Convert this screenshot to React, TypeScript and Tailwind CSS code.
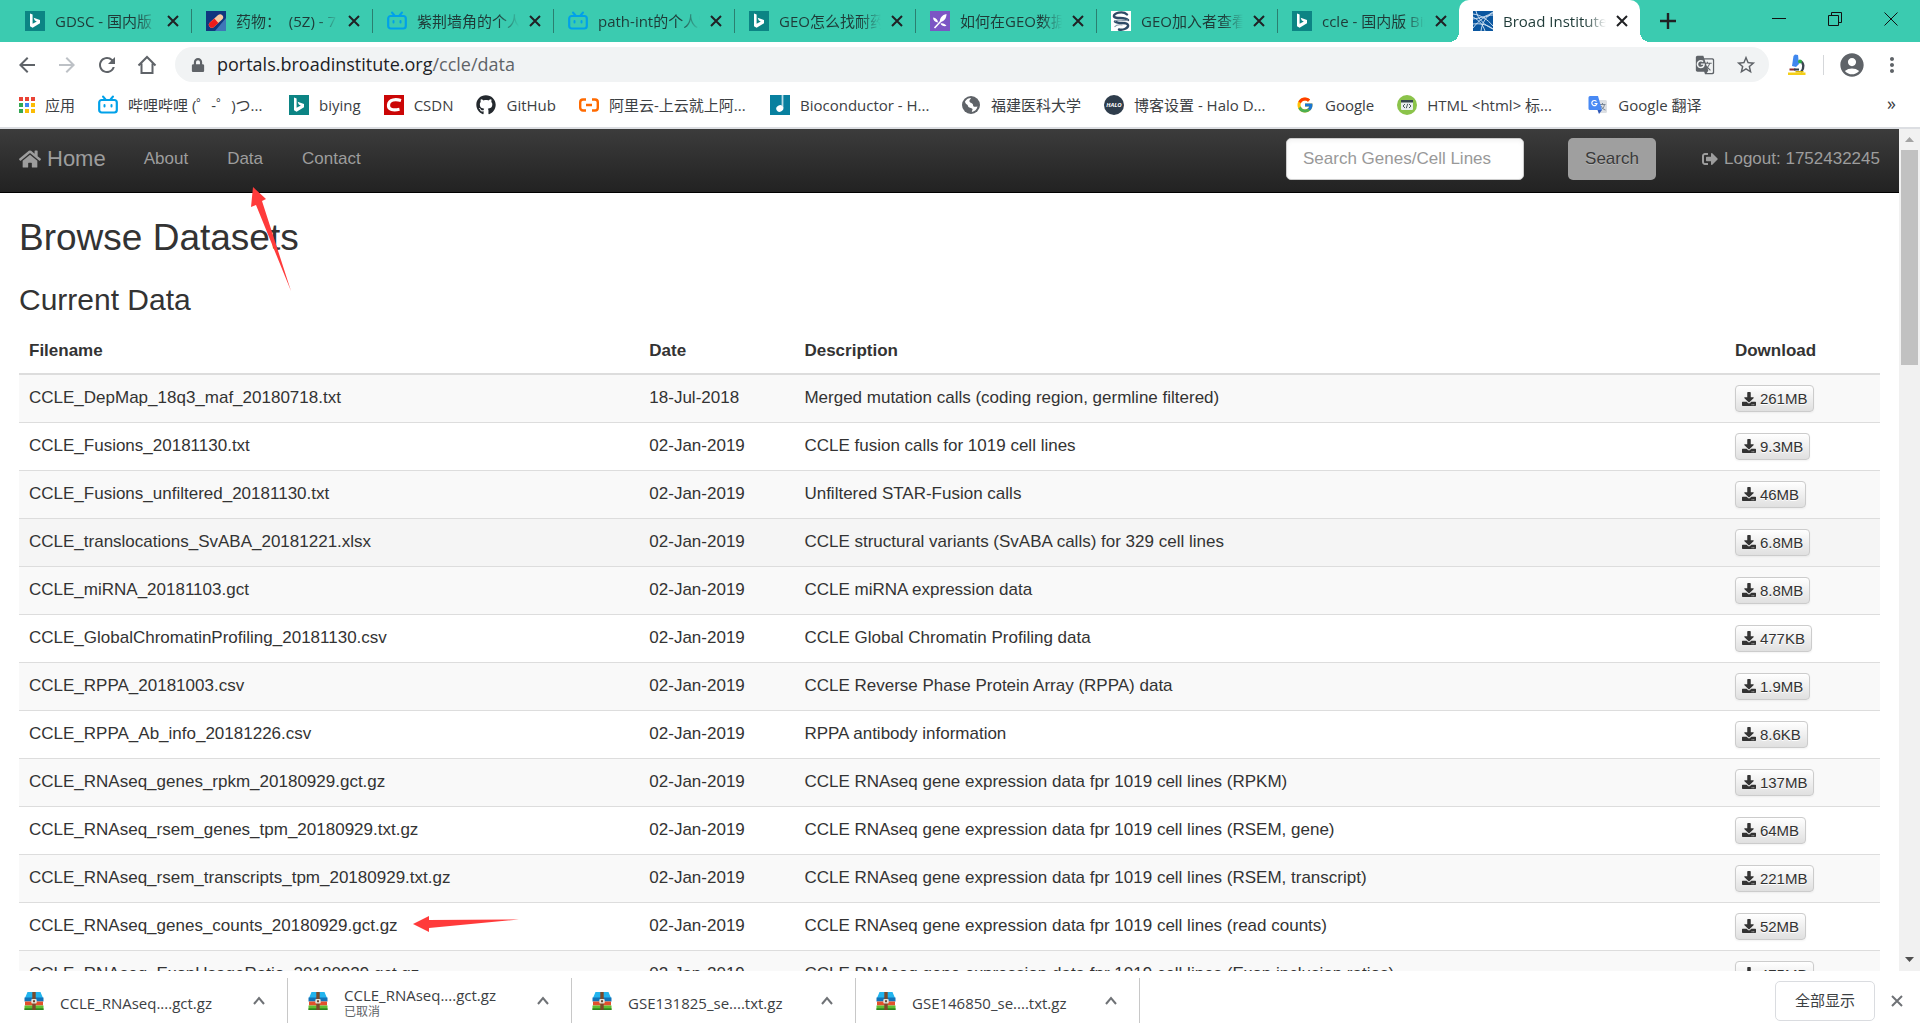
import type { ReactNode } from "react";
import { FaDownload, FaGithub, FaHome, FaLock, FaSignOutAlt } from "react-icons/fa";
import { FcGoogle } from "react-icons/fc";
import {
  MdAccountCircle,
  MdArrowBack,
  MdArrowForward,
  MdGTranslate,
  MdMoreVert,
  MdRefresh,
  MdStarBorder,
} from "react-icons/md";

interface Tab {
  title: string;
  icon: ReactNode;
  active?: boolean;
  last?: boolean;
}

interface Bookmark {
  label: string;
  icon: ReactNode;
  wide?: boolean;
}

interface Dataset {
  name: string;
  date: string;
  description: string;
  size: string;
}

interface DownloadItem {
  name: string;
  status?: string;
}

function BingIcon() {
  return (
    <svg viewBox="0 0 20 20" className="size-5">
      <rect width="20" height="20" fill="#0c8484" />
      <path d="M5 2.500l2.600 1v9.300l4.200-2.200-2-1L8.600 6.800l6.400 2.300v3.100L7.600 16.800 5 15.200z" fill="#fff" />
    </svg>
  );
}

function BiliIcon() {
  return (
    <svg viewBox="0 0 20 20" className="size-5" fill="none" stroke="#00a1e9" strokeLinecap="round">
      <rect x="1.200" y="5" width="17.600" height="12.500" rx="2.500" strokeWidth="2.200" />
      <path d="M5 1.500l2.500 3M15 1.500l-2.500 3" strokeWidth="2" />
      <path d="M6.500 10v1.500M13.500 10v1.500" strokeWidth="2" />
    </svg>
  );
}

function PillIcon() {
  return (
    <svg viewBox="0 0 20 20" className="size-5">
      <rect width="20" height="20" fill="#10377f" />
      <path d="M9 20L20 7v13z" fill="#3f76b8" />
      <g transform="rotate(-42 10 10)">
        <rect x="1.500" y="7" width="17" height="6" rx="3" fill="#f8c9a0" />
        <path d="M10.500 7h-6a3 3 0 0 0 0 6h6z" fill="#ee1c1c" />
      </g>
    </svg>
  );
}

function FeatherIcon() {
  return (
    <svg viewBox="0 0 20 20" className="size-5">
      <rect width="20" height="20" fill="#7c55c4" />
      <path d="M16.500 3c-4.500 1-7 4-6.500 8 4-.5 6.500-3.500 6.500-8zM3 6.500c.2 2.800 2 4.800 5 5C8 8.800 6 7 3 6.500zM16.500 15c-1.500-2-3.500-3-6-2.500 1 2.200 3 3 6 2.500z" fill="#fff" />
      <path d="M11 10l-6.500 7" stroke="#fff" strokeWidth="1.600" />
    </svg>
  );
}

function HelixIcon() {
  return (
    <svg viewBox="0 0 20 20" className="size-5">
      <rect width="20" height="20" fill="#fff" />
      <path
        d="M16 3.500C12-.5 2 2 3 5.500c1 3 11 0 14 3.500M4 10.500c4 3 12 0 13 3.500.8 3-5 5.500-9 4.500"
        fill="none"
        stroke="#2e4a66"
        strokeWidth="2.400"
        strokeLinecap="round"
      />
      <path d="M4 10.500C5 7 13 11 17 9M3.500 16c1.500-2 5-2.500 8-2" fill="none" stroke="#8a9bab" strokeWidth="1.200" />
    </svg>
  );
}

function BroadIcon() {
  return (
    <svg viewBox="0 0 20 20" className="size-5">
      <rect width="20" height="20" fill="#0b57a0" />
      <path
        d="M0 3c8 1 14 5 20 12M0 8c8-1 15-3 20-7M0 17C6 9 13 4 20 4M3 0c2 8 8 14 17 18M0 13c8-1 15 1 20 5M8 20c1-8 5-15 12-18M0 6c7 4 10 8 12 14"
        fill="none"
        stroke="#d8e8f6"
        strokeWidth=".9"
      />
    </svg>
  );
}

function AppsIcon() {
  return (
    <svg viewBox="0 0 16 16" className="size-4">
      <path d="M0 0h4v4H0zM6 0h4v4H6zM12 0h4v4h-4z" fill="#ea4335" />
      <path d="M0 6h4v4H0z" fill="#34a853" />
      <path d="M6 6h4v4H6z" fill="#4285f4" />
      <path d="M12 6h4v4h-4zM6 12h4v4H6zM12 12h4v4h-4z" fill="#fbbc05" />
      <path d="M0 12h4v4H0z" fill="#34a853" />
    </svg>
  );
}

function CsdnIcon() {
  return (
    <svg viewBox="0 0 20 20" className="size-5">
      <rect width="20" height="20" fill="#cb0606" />
      <path d="M17 5.500c-5-1.500-12-1.500-12.500 4.500-.5 5 5 5.500 11 4.300" fill="none" stroke="#fff" strokeWidth="3.200" />
    </svg>
  );
}

function AliyunIcon() {
  return (
    <svg viewBox="0 0 20 20" className="size-5" fill="none" stroke="#ff6a00" strokeWidth="2.400">
      <path d="M7 4.500H4A2.800 2.800 0 0 0 1.200 7.300v5.400A2.800 2.800 0 0 0 4 15.500h3M13 4.500h3a2.800 2.800 0 0 1 2.800 2.800v5.400a2.800 2.800 0 0 1-2.800 2.800h-3M7 10h6" />
    </svg>
  );
}

function BioconductorIcon() {
  return (
    <svg viewBox="0 0 20 20" className="size-5">
      <rect width="20" height="20" fill="#08809f" />
      <path d="M12.500 0v13" stroke="#b9dbe5" strokeWidth="1.800" />
      <ellipse cx="9.800" cy="13.500" rx="3.600" ry="3.200" transform="rotate(-30 9.800 13.500)" fill="#fff" />
    </svg>
  );
}

function GlobeIcon() {
  return (
    <svg viewBox="0 0 20 20" className="size-5">
      <circle cx="10" cy="10" r="9" fill="#5f6368" />
      <path d="M4 6.500c1.500-2.500 3.500-3.500 6-3.500-.5 1.500-2 2-1.500 3.500S12 8 12 10s2 2 4.500 1.500c-.5 3-3 5-5.500 5.500-.5-1.500 1.500-2.500 0-3.500S7 12.500 7 11 4 9 4 6.500z" fill="#fff" />
      <path d="M10.500 4.500c1.500-.5 3.500 0 4.500 2l-2.500.5z" fill="#5f6368" />
    </svg>
  );
}

function HaloIcon() {
  return (
    <span className="flex size-5 items-center justify-center rounded-full bg-[#2f3d4c] text-[6px] font-bold text-white italic">
      HALO
    </span>
  );
}

function HtmlIcon() {
  return (
    <svg viewBox="0 0 20 20" className="size-5">
      <circle cx="10" cy="10" r="10" fill="#8bc34a" />
      <rect x="4" y="5" width="12" height="10" rx="1" fill="#e9edf0" />
      <path d="M4 5h12v2.500H4z" fill="#37474f" />
      <path d="M8 9l-2 2 2 2M12 9l2 2-2 2M10.700 8.800l-1.400 4.400" fill="none" stroke="#37474f" strokeWidth=".9" />
    </svg>
  );
}

function TranslateIcon() {
  return (
    <svg viewBox="0 0 20 20" className="size-5">
      <path d="M7 5h10.500a1.500 1.500 0 0 1 1.500 1.500v10a1.500 1.500 0 0 1-1.500 1.500H11z" fill="#dcdfe3" />
      <path d="M11.500 9.500h6M14.500 8v1.500M16.500 9.500c-.5 3-2 4.500-4 5.500M13 11c1 2 2.500 3.500 4.500 4" fill="none" stroke="#7a8694" strokeWidth="1" />
      <path d="M2 1h8l4 14H2a1.500 1.500 0 0 1-1.500-1.500v-11A1.500 1.500 0 0 1 2 1z" fill="#4889f4" />
      <path d="M9.500 15H14l-3 4z" fill="#2d58b8" />
      <path d="M8.500 6.500A2.600 2.600 0 1 0 9 8.500H6.500" fill="none" stroke="#fff" strokeWidth="1.200" />
    </svg>
  );
}

function HouseIcon() {
  return (
    <svg viewBox="0 0 24 24" className="size-6" fill="none" stroke="currentColor" strokeWidth="2">
      <path d="M3.500 12.500L12 4l8.500 8.500M6.500 10.500V20h11v-9.500" />
    </svg>
  );
}

function MicroscopeIcon() {
  return (
    <svg viewBox="0 0 20 22" className="h-[22px] w-5">
      <path d="M13 7c4 1.500 4.500 7 1 11" fill="none" stroke="#3b4650" strokeWidth="2.400" />
      <path d="M6.500 2L8 .5l3 .5 1 9-3 3-4-1z" fill="#3f87ee" />
      <circle cx="13" cy="7.500" r="2" fill="#2eaa4a" />
      <path d="M2.500 14.500h6v2h-6z" fill="#8e2a2a" />
      <path d="M7 14.500h5v2H7z" fill="#33404c" />
      <path d="M8.500 17h8v1.500h-8z" fill="#d9b400" />
      <path d="M1 18.500h17.500V21H1z" fill="#f5cf16" />
    </svg>
  );
}

function ArchiveIcon() {
  return (
    <svg viewBox="0 0 20 20" className="size-5 shrink-0">
      <path d="M3.500 1h13L19 7H1z" fill="#22b4ee" />
      <path d="M.5 6.500h19v4H.5z" fill="#1273b8" />
      <path d="M1 10.500h18v4H1z" fill="#e2502c" />
      <path d="M.5 14.500h19V19H.5z" fill="#5fbf30" />
      <path d="M.5 17.300h19V19H.5z" fill="#2e8420" />
      <path d="M8.300 1h3.400v18H8.300z" fill="#7b4a2b" />
      <rect x="7.300" y="8" width="5.400" height="4.500" rx="1" fill="#e7e2d8" />
      <rect x="9" y="9.200" width="2" height="2" fill="#6b4a35" />
    </svg>
  );
}

function CloseIcon({ className }: { className: string }) {
  return (
    <svg viewBox="0 0 12 12" className={className} fill="none" stroke="currentColor" strokeWidth="2">
      <path d="M1 1l10 10M11 1L1 11" />
    </svg>
  );
}

const tabs: Tab[] = [
  { title: "GDSC - 国内版 Bing", icon: <BingIcon /> },
  { title: "药物：\u00a0\u00a0(5Z) - 7", icon: <PillIcon /> },
  { title: "紫荆墙角的个人空间", icon: <BiliIcon /> },
  { title: "path-int的个人空间", icon: <BiliIcon /> },
  { title: "GEO怎么找耐药数据", icon: <BingIcon /> },
  { title: "如何在GEO数据库", icon: <FeatherIcon /> },
  { title: "GEO加入者查看器", icon: <HelixIcon /> },
  { title: "ccle - 国内版 Bing", icon: <BingIcon />, last: true },
  { title: "Broad Institute", icon: <BroadIcon />, active: true },
];

const bookmarks: Bookmark[] = [
  { label: "哔哩哔哩 (゜-゜)つ...", icon: <BiliIcon />, wide: true },
  { label: "biying", icon: <BingIcon /> },
  { label: "CSDN", icon: <CsdnIcon /> },
  { label: "GitHub", icon: <FaGithub className="size-5 text-[#24292e]" /> },
  { label: "阿里云-上云就上阿...", icon: <AliyunIcon />, wide: true },
  { label: "Bioconductor - H...", icon: <BioconductorIcon />, wide: true },
  { label: "福建医科大学", icon: <GlobeIcon /> },
  { label: "博客设置 - Halo D...", icon: <HaloIcon />, wide: true },
  { label: "Google", icon: <FcGoogle className="size-5 p-px" /> },
  { label: "HTML <html> 标...", icon: <HtmlIcon />, wide: true },
  { label: "Google 翻译", icon: <TranslateIcon /> },
];

const datasets: Dataset[] = [
  { name: "CCLE_DepMap_18q3_maf_20180718.txt", date: "18-Jul-2018", description: "Merged mutation calls (coding region, germline filtered)", size: "261MB" },
  { name: "CCLE_Fusions_20181130.txt", date: "02-Jan-2019", description: "CCLE fusion calls for 1019 cell lines", size: "9.3MB" },
  { name: "CCLE_Fusions_unfiltered_20181130.txt", date: "02-Jan-2019", description: "Unfiltered STAR-Fusion calls", size: "46MB" },
  { name: "CCLE_translocations_SvABA_20181221.xlsx", date: "02-Jan-2019", description: "CCLE structural variants (SvABA calls) for 329 cell lines", size: "6.8MB" },
  { name: "CCLE_miRNA_20181103.gct", date: "02-Jan-2019", description: "CCLE miRNA expression data", size: "8.8MB" },
  { name: "CCLE_GlobalChromatinProfiling_20181130.csv", date: "02-Jan-2019", description: "CCLE Global Chromatin Profiling data", size: "477KB" },
  { name: "CCLE_RPPA_20181003.csv", date: "02-Jan-2019", description: "CCLE Reverse Phase Protein Array (RPPA) data", size: "1.9MB" },
  { name: "CCLE_RPPA_Ab_info_20181226.csv", date: "02-Jan-2019", description: "RPPA antibody information", size: "8.6KB" },
  { name: "CCLE_RNAseq_genes_rpkm_20180929.gct.gz", date: "02-Jan-2019", description: "CCLE RNAseq gene expression data fpr 1019 cell lines (RPKM)", size: "137MB" },
  { name: "CCLE_RNAseq_rsem_genes_tpm_20180929.txt.gz", date: "02-Jan-2019", description: "CCLE RNAseq gene expression data fpr 1019 cell lines (RSEM, gene)", size: "64MB" },
  { name: "CCLE_RNAseq_rsem_transcripts_tpm_20180929.txt.gz", date: "02-Jan-2019", description: "CCLE RNAseq gene expression data fpr 1019 cell lines (RSEM, transcript)", size: "221MB" },
  { name: "CCLE_RNAseq_genes_counts_20180929.gct.gz", date: "02-Jan-2019", description: "CCLE RNAseq gene expression data fpr 1019 cell lines (read counts)", size: "52MB" },
  { name: "CCLE_RNAseq_ExonUsageRatio_20180929.gct.gz", date: "02-Jan-2019", description: "CCLE RNAseq gene expression data fpr 1019 cell lines (Exon inclusion ratios)", size: "475MB" },
];

const downloads: DownloadItem[] = [
  { name: "CCLE_RNAseq....gct.gz" },
  { name: "CCLE_RNAseq....gct.gz", status: "已取消" },
  { name: "GSE131825_se....txt.gz" },
  { name: "GSE146850_se....txt.gz" },
];

function TabItem({ tab }: { tab: Tab }) {
  return (
    <div
      className={
        tab.active
          ? "relative flex h-full min-w-0 flex-[0_1_181px] items-center rounded-t-[10px] bg-white pr-3 pl-3.5"
          : "flex h-full min-w-0 flex-[0_1_181px] items-center"
      }
    >
      {tab.active && (
        <>
          <span className="absolute bottom-0 -left-2.5 size-2.5 bg-[radial-gradient(circle_at_0_0,transparent_10px,white_10px)]" />
          <span className="absolute -right-2.5 bottom-0 size-2.5 bg-[radial-gradient(circle_at_100%_0,transparent_10px,white_10px)]" />
        </>
      )}
      <div className={tab.active ? "flex min-w-0 flex-1 items-center" : "flex min-w-0 flex-1 items-center pr-3 pl-3.5"}>
        <span className="shrink-0">{tab.icon}</span>
        <span className="ml-2.5 min-w-0 flex-1 overflow-hidden whitespace-nowrap text-[#1f3b38] [mask-image:linear-gradient(to_right,black_80%,transparent)]">
          {tab.title}
        </span>
        <button type="button" aria-label="Close tab" className="ml-2.5 text-[#202124]">
          <CloseIcon className="size-3" />
        </button>
      </div>
      {!tab.active && !tab.last && <span className="h-6 w-px shrink-0 bg-[#2b7f70]" />}
    </div>
  );
}

function TabStrip() {
  return (
    <div className="flex h-[42px] shrink-0 items-center bg-[#3bcbb0] pl-[11px] text-[15px]">
      {tabs.map((tab) => (
        <TabItem key={tab.title} tab={tab} />
      ))}
      <button type="button" aria-label="New tab" className="ml-5 text-[#202124]">
        <svg viewBox="0 0 16 16" className="size-4" stroke="currentColor" strokeWidth="2.400">
          <path d="M8 0v16M0 8h16" />
        </svg>
      </button>
      <div className="ml-auto flex items-center gap-[42px] pr-[22px] pb-1">
        <button type="button" aria-label="Minimize">
          <svg viewBox="0 0 14 14" className="size-3.5" stroke="#111">
            <path d="M0 6.500h14" />
          </svg>
        </button>
        <button type="button" aria-label="Restore">
          <svg viewBox="0 0 14 14" className="size-3.5" fill="none" stroke="#111">
            <path d="M.5 3.500h10v10H.5zM3.500 3V.5h10v10H11" />
          </svg>
        </button>
        <button type="button" aria-label="Close window">
          <svg viewBox="0 0 14 14" className="size-3.5" stroke="#111">
            <path d="M.5.5l13 13M13.500.5l-13 13" />
          </svg>
        </button>
      </div>
    </div>
  );
}

function Toolbar() {
  return (
    <div className="flex h-[45px] shrink-0 items-center bg-white pr-4 pl-[15px] text-[#5f6368]">
      <div className="flex items-center gap-4">
        <button type="button" aria-label="Back"><MdArrowBack className="size-6" /></button>
        <button type="button" aria-label="Forward" className="text-[#bdc1c6]"><MdArrowForward className="size-6" /></button>
        <button type="button" aria-label="Reload"><MdRefresh className="size-6" /></button>
        <button type="button" aria-label="Home page"><HouseIcon /></button>
      </div>
      <div className="ml-4 flex h-[35px] flex-1 items-center rounded-full bg-[#f1f3f4] pr-3 pl-4">
        <FaLock className="size-3.5" />
        <p className="ml-3 flex-1 text-[18px]">
          <span className="text-[#202124]">portals.broadinstitute.org</span>/ccle/data
        </p>
        <button type="button" aria-label="Translate this page" className="mr-5"><MdGTranslate className="size-5" /></button>
        <button type="button" aria-label="Bookmark"><MdStarBorder className="size-[22px]" /></button>
      </div>
      <button type="button" aria-label="Extension" className="ml-[18px]"><MicroscopeIcon /></button>
      <span className="ml-4 h-5 w-px bg-[#d5d7da]" />
      <button type="button" aria-label="Profile" className="ml-3.5"><MdAccountCircle className="size-7" /></button>
      <button type="button" aria-label="Menu" className="ml-3.5"><MdMoreVert className="size-6" /></button>
    </div>
  );
}

function BookmarksBar() {
  return (
    <nav className="flex h-[42px] shrink-0 items-center gap-[23px] border-b-2 border-[#dcdee2] bg-white pr-6 pb-1 pl-[19px] text-[15px] text-[#3c4043]">
      <a href="#apps" className="flex items-center gap-2.5">
        <AppsIcon />
        应用
      </a>
      {bookmarks.map((item) => (
        <a
          key={item.label}
          href="#bookmark"
          className={
            item.wide
              ? "flex w-[168px] items-center gap-2.5 whitespace-nowrap"
              : "flex items-center gap-2.5 whitespace-nowrap"
          }
        >
          <span className="shrink-0">{item.icon}</span>
          {item.label}
        </a>
      ))}
      <button type="button" aria-label="More bookmarks" className="ml-auto pb-1 text-[18px]">»</button>
    </nav>
  );
}

function SiteNav() {
  return (
    <nav className="flex h-16 items-center border-b border-black bg-linear-to-b from-[#3c3c3c] to-[#222] px-[19px] pb-1 text-[17px] text-[#9d9d9d]">
      <a href="#home" className="flex items-center gap-1.5 text-[22px]">
        <FaHome className="size-[22px]" />
        Home
      </a>
      <div className="ml-[38px] flex gap-[39px]">
        <a href="#about">About</a>
        <a href="#data">Data</a>
        <a href="#contact">Contact</a>
      </div>
      <form className="ml-auto flex gap-11" onSubmit={(e) => e.preventDefault()}>
        <input
          type="text"
          aria-label="Search Genes/Cell Lines"
          placeholder="Search Genes/Cell Lines"
          className="h-[42px] w-[238px] rounded-[5px] border border-[#ccc] bg-white px-4 text-[#555] shadow-inner placeholder:text-[#999]"
        />
        <button
          type="submit"
          className="h-[42px] w-[88px] rounded-[5px] bg-[#9f9f9f] text-[#3a3a3a] [text-shadow:0_1px_0_#b5b5b5]"
        >
          Search
        </button>
      </form>
      <a href="#logout" className="ml-[46px] flex items-center gap-1.5">
        <FaSignOutAlt className="size-4" />
        Logout: 1752432245
      </a>
    </nav>
  );
}

function DatasetTable() {
  return (
    <table className="w-full table-fixed text-left leading-[25px]">
      <thead>
        <tr className="border-b-2 border-[#ddd]">
          <th className="w-4/12 p-2.5">Filename</th>
          <th className="w-1/12 p-2.5">Date</th>
          <th className="w-6/12 p-2.5">Description</th>
          <th className="w-1/12 p-2.5">Download</th>
        </tr>
      </thead>
      <tbody>
        {datasets.map((row, i) => (
          <tr
            key={row.name}
            className={
              i === 3
                ? "h-12 border-b border-[#ddd] bg-[#f5f5f5] align-top"
                : "h-12 border-b border-[#ddd] align-top odd:bg-[#f9f9f9]"
            }
          >
            <td className="px-2.5 pt-2.5 whitespace-nowrap">{row.name}</td>
            <td className="px-2.5 pt-2.5 whitespace-nowrap">{row.date}</td>
            <td className="px-2.5 pt-2.5 whitespace-nowrap">{row.description}</td>
            <td className="px-2.5 pt-2.5">
              <button
                type="button"
                className="flex h-[27px] items-center gap-1 rounded-sm border border-[#ccc] bg-linear-to-b from-white to-[#e0e0e0] px-1.5 text-[15px] shadow-xs [text-shadow:0_1px_0_#fff]"
              >
                <FaDownload className="size-3.5" />
                {row.size}
              </button>
            </td>
          </tr>
        ))}
      </tbody>
    </table>
  );
}

// red pointers laid over the page
function Annotations() {
  return (
    <>
      <svg viewBox="0 0 40 104" className="pointer-events-none absolute top-[58px] left-[251px] h-[104px] w-10">
        <path d="M2 0L15 12l-4 2 29 90L5 18l-5 2z" fill="#ff3b3b" />
      </svg>
      <svg viewBox="0 0 106 18" className="pointer-events-none absolute top-[786px] left-[413px] h-[18px] w-[106px]">
        <path d="M0 9L16 1v4l90-.5L16 13v4z" fill="#ff3b3b" />
      </svg>
    </>
  );
}

function Scrollbar() {
  return (
    <div className="flex w-[21px] shrink-0 flex-col items-center bg-[#f1f1f1]">
      <svg viewBox="0 0 21 21" className="size-[21px] shrink-0">
        <path d="M6 13l4.500-5 4.500 5z" fill="#a3a3a3" />
      </svg>
      <div className="h-[215px] w-[17px] bg-[#c1c1c1]" />
      <svg viewBox="0 0 21 21" className="mt-auto size-[21px] shrink-0">
        <path d="M6 7l4.500 5L15 7z" fill="#505050" />
      </svg>
    </div>
  );
}

function DownloadShelf() {
  return (
    <footer className="flex h-[59px] shrink-0 items-center bg-white pl-1 text-[15px] text-[#3c4043]">
      {downloads.map((item, i) => (
        <div key={i} className="flex h-[45px] w-[284px] items-center border-r border-[#c8c8c8] pr-5 pl-5">
          <ArchiveIcon />
          <div className="ml-4 flex-1 pt-1">
            <p className="leading-[18px]">{item.name}</p>
            {item.status && <p className="text-xs leading-4 text-[#5f6368]">{item.status}</p>}
          </div>
          <button type="button" aria-label="Download options" className="text-[#6f7276]">
            <svg viewBox="0 0 16 16" className="size-4" fill="none" stroke="currentColor" strokeWidth="2">
              <path d="M3 11l5-6 5 6" />
            </svg>
          </button>
        </div>
      ))}
      <button type="button" className="ml-auto h-10 w-[100px] rounded-[5px] border border-[#dadce0]">
        全部显示
      </button>
      <button type="button" aria-label="Close downloads" className="mr-[17px] ml-4 text-[#6f7276]">
        <CloseIcon className="size-3" />
      </button>
    </footer>
  );
}

export default function App() {
  return (
    <div className="flex h-screen flex-col overflow-hidden bg-white font-['Open_Sans','Noto_Sans_CJK_SC',sans-serif]">
      <TabStrip />
      <Toolbar />
      <BookmarksBar />
      <div className="flex min-h-0 flex-1">
        <div className="relative min-w-0 flex-1 overflow-hidden font-['Liberation_Sans',Arial,sans-serif] text-[17px] text-[#333]">
          <SiteNav />
          <main className="px-[19px]">
            <h2 className="pt-[25px] text-[37px] leading-10">Browse Datasets</h2>
            <h3 className="mt-6 mb-2.5 text-[30px] leading-9">Current Data</h3>
            <DatasetTable />
          </main>
          <Annotations />
        </div>
        <Scrollbar />
      </div>
      <DownloadShelf />
    </div>
  );
}
